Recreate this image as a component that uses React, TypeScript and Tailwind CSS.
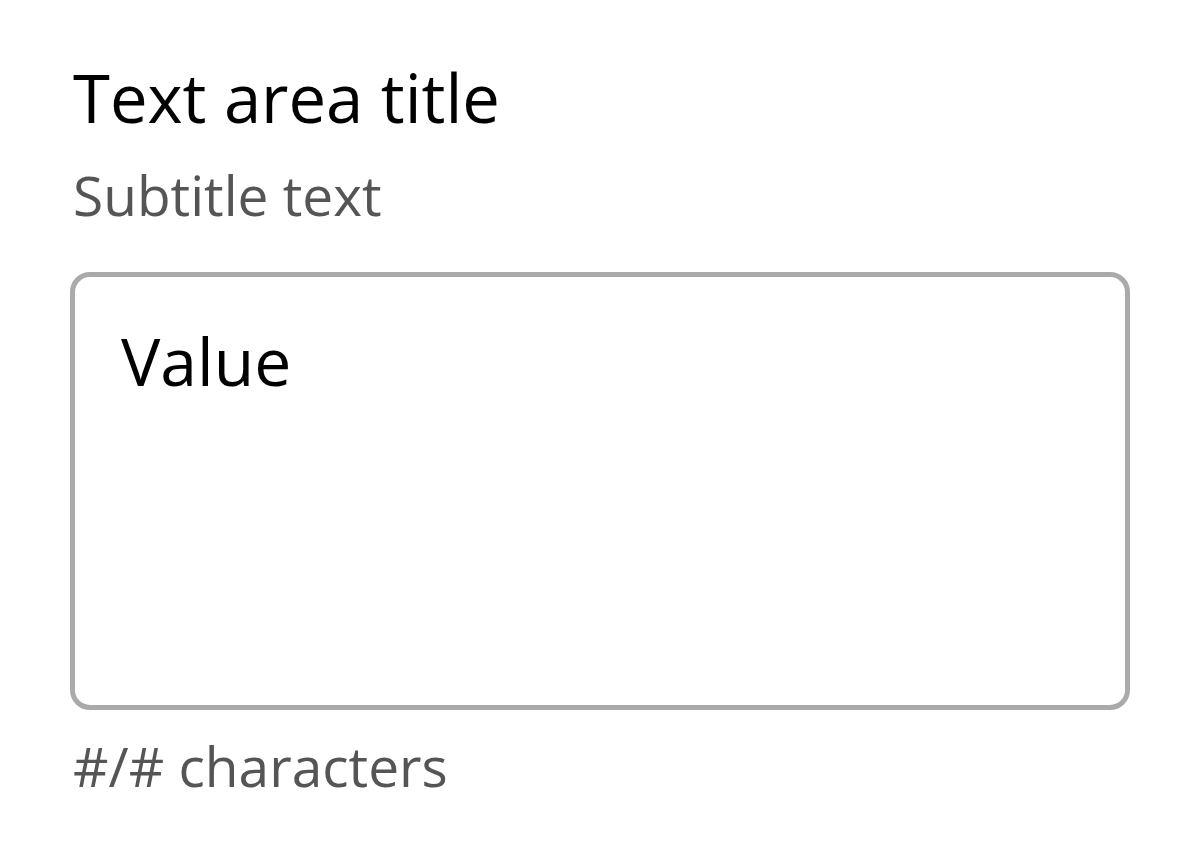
export default function App() {
  return (
    <div className="min-h-screen bg-white px-[70px] pt-[64px] font-['Open_Sans',sans-serif]">
      <h1 className="pl-[3px] text-[67px] leading-none font-medium text-black">Text area title</h1>
      <p className="mt-[36px] pl-[3px] text-[55px] leading-none text-[#555555]">Subtitle text</p>

      {/* Input box */}
      <textarea
        className="mt-[50px] block h-[438px] w-full resize-none rounded-[20px] border-[5px] border-[#aaaaaa] bg-white px-[46px] pt-[50px] text-[66px] leading-none text-black outline-none"
        defaultValue="Value"
      />

      <p className="mt-[28px] pl-[3px] text-[55px] leading-none text-[#555555]">#/# characters</p>
    </div>
  );
}
